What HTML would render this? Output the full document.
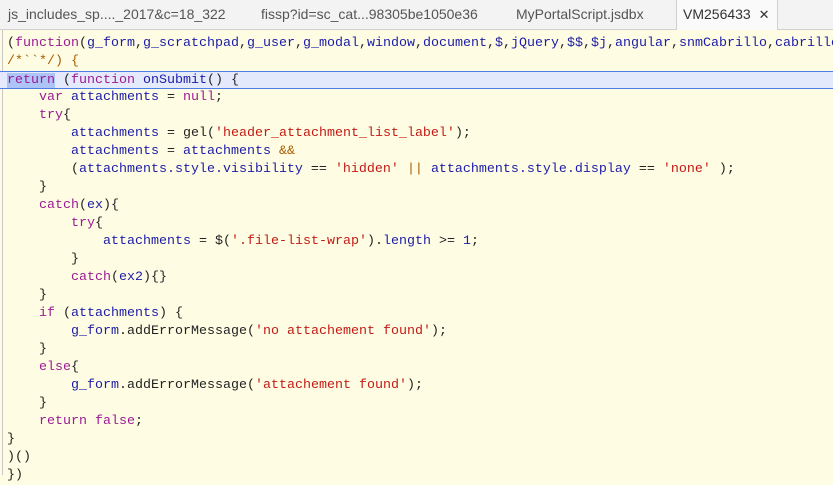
<!DOCTYPE html>
<html><head><meta charset="utf-8"><style>
html,body{margin:0;padding:0;width:833px;height:475px;overflow:hidden;background:#fefde3;}
#tabs{position:absolute;left:0;top:0;width:833px;height:29px;background:#f3f3f3;border-bottom:1px solid #cfcfcf;font-family:"Liberation Sans",sans-serif;font-size:14px;color:#555;}
.tab{position:absolute;top:0;height:29px;line-height:29px;white-space:nowrap;}
.act{background:#fafafa;border-left:1px solid #d0d0d0;border-right:1px solid #d0d0d0;height:30px;color:#333;}
#code{position:absolute;left:0;top:35px;width:833px;font-family:"Liberation Mono",monospace;font-size:13.33px;line-height:18px;color:#222;}
#code div{height:18px;white-space:pre;padding-left:7px;}
#lb{position:absolute;left:2px;top:30px;width:1px;height:445px;background:#c8c8c8;}
.hl{background:#e4eafc;border-top:1px solid #4d7ee8;border-bottom:1px solid #4d7ee8;box-sizing:border-box;}
.k{color:#9c1a94}.i{color:#1c1ca8}.s{color:#c41a16}.o{color:#a85c00}
.sel{background:#aec4f7}
</style></head><body>
<div id="tabs">
<div class="tab" style="left:8px">js_includes_sp...._2017&amp;c=18_322</div>
<div class="tab" style="left:261px">fissp?id=sc_cat...98305be1050e36</div>
<div class="tab" style="left:516px">MyPortalScript.jsdbx</div>
<div class="tab act" style="left:676px;width:102px;padding-left:6px;box-sizing:border-box">VM256433 <span style="margin-left:4px;font-size:13px">✕</span></div>
</div>
<div id="lb"></div>
<div id="code">
<div>(<span class="k">function</span>(<span class="i">g_form</span>,<span class="i">g_scratchpad</span>,<span class="i">g_user</span>,<span class="i">g_modal</span>,<span class="i">window</span>,<span class="i">document</span>,<span class="i">$</span>,<span class="i">jQuery</span>,<span class="i">$$</span>,<span class="i">$j</span>,<span class="i">angular</span>,<span class="i">snmCabrillo</span>,<span class="i">cabrillo</span></div>
<div class="o">/*``*/) {</div>
<div class="hl"><span class="k sel">return</span> (<span class="k">function</span> <span class="i">onSubmit</span>() {</div>
<div>    <span class="k">var</span> <span class="i">attachments</span> = <span class="k">null</span>;</div>
<div>    <span class="k">try</span>{</div>
<div>        <span class="i">attachments</span> = gel(<span class="s">'header_attachment_list_label'</span>);</div>
<div>        <span class="i">attachments</span> = <span class="i">attachments</span> <span class="o">&amp;&amp;</span></div>
<div>        (<span class="i">attachments.style.visibility</span> == <span class="s">'hidden'</span> <span class="o">||</span> <span class="i">attachments.style.display</span> == <span class="s">'none'</span> );</div>
<div>    }</div>
<div>    <span class="k">catch</span>(<span class="i">ex</span>){</div>
<div>        <span class="k">try</span>{</div>
<div>            <span class="i">attachments</span> = $(<span class="s">'.file-list-wrap'</span>).<span class="i">length</span> &gt;= <span class="i">1</span>;</div>
<div>        }</div>
<div>        <span class="k">catch</span>(<span class="i">ex2</span>){}</div>
<div>    }</div>
<div>    <span class="k">if</span> (<span class="i">attachments</span>) {</div>
<div>        <span class="i">g_form</span>.addErrorMessage(<span class="s">'no attachement found'</span>);</div>
<div>    }</div>
<div>    <span class="k">else</span>{</div>
<div>        <span class="i">g_form</span>.addErrorMessage(<span class="s">'attachement found'</span>);</div>
<div>    }</div>
<div>    <span class="k">return</span> <span class="k">false</span>;</div>
<div>}</div>
<div>)()</div>
<div>})</div>
</div>
</body></html>
